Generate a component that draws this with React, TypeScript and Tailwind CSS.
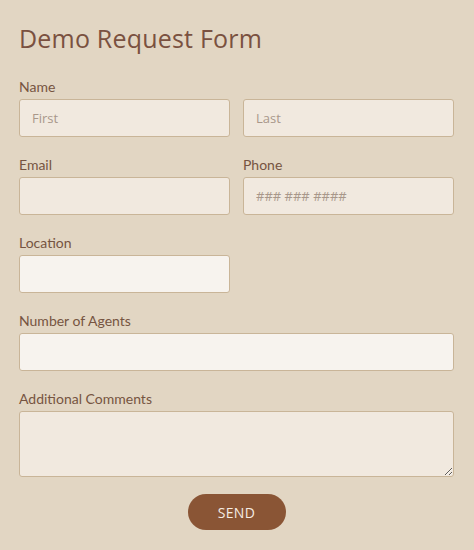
import React from "react";

const inputBase =
  "block w-full h-[38px] rounded-[3px] border border-[#c9b598] px-3 text-[13px] text-[#6b4a35] placeholder:text-[#a8978a] outline-none";

function Field({
  label,
  children,
}: {
  label: string;
  children: React.ReactNode;
}) {
  return (
    <div className="flex flex-col">
      <label
        className="mb-[2px] h-[20px] text-[14px] leading-[20px] text-[#765441]"
        style={{ fontFamily: 'Lato, "Open Sans", sans-serif' }}
      >
        {label}
      </label>
      {children}
    </div>
  );
}

export default function App() {
  return (
    <div
      className="w-[474px] h-[550px] bg-[#e2d6c3] px-[19px] pr-[20px] pt-[20px]"
      style={{ fontFamily: '"Open Sans", "Noto Sans", sans-serif' }}
    >
      <h1 className="h-[36px] text-[25px] leading-[36px] font-normal text-[#7a5140] tracking-[0.2px]">
        Demo Request Form
      </h1>

      <div className="mt-[21px] flex flex-col gap-[18px]">
        <Field label="Name">
          <div className="grid grid-cols-2 gap-[13px]">
            <input className={`${inputBase} bg-[#f1e9df]`} placeholder="First" />
            <input className={`${inputBase} bg-[#f1e9df]`} placeholder="Last" />
          </div>
        </Field>

        <div className="grid grid-cols-2 gap-[13px]">
          <Field label="Email">
            <input className={`${inputBase} bg-[#f1e9df]`} />
          </Field>
          <Field label="Phone">
            <input
              className={`${inputBase} bg-[#f1e9df]`}
              placeholder="### ### ####"
            />
          </Field>
        </div>

        <div className="grid grid-cols-2 gap-[13px]">
          <Field label="Location">
            <input className={`${inputBase} bg-[#f7f3ee]`} />
          </Field>
        </div>

        <Field label="Number of Agents">
          <input className={`${inputBase} bg-[#f7f3ee]`} />
        </Field>

        <Field label="Additional Comments">
          <textarea
            className="block w-full h-[66px] rounded-[3px] border border-[#c9b598] bg-[#f1e9df] px-3 py-2 text-[13px] text-[#6b4a35] outline-none"
          />
        </Field>
      </div>

      <div className="mt-[17px] flex justify-center">
        <button className="h-[36px] w-[98px] rounded-full bg-[#8a5535] text-[14px] text-[#f6ede4] tracking-[0.3px]">
          SEND
        </button>
      </div>
    </div>
  );
}
